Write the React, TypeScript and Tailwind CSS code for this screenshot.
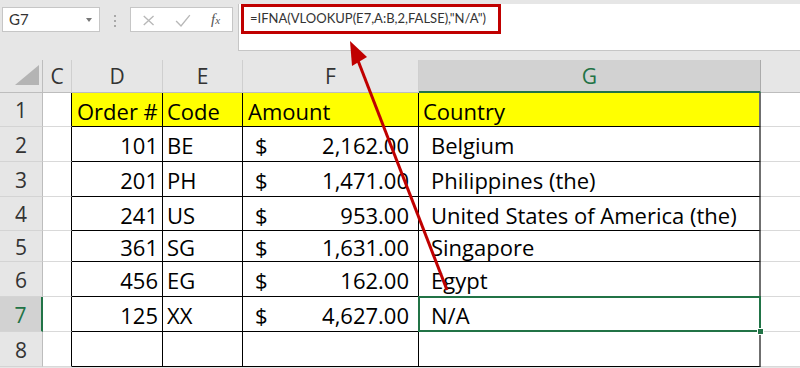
import React from "react";

type Row = {
  n: number;
  d: string;
  e: string;
  f?: string;
  amt?: string;
  g: string;
  head?: boolean;
};

const rows: Row[] = [
  { n: 1, d: "Order #", e: "Code", f: "Amount", g: "Country", head: true },
  { n: 2, d: "101", e: "BE", amt: "2,162.00", g: "Belgium" },
  { n: 3, d: "201", e: "PH", amt: "1,471.00", g: "Philippines (the)" },
  { n: 4, d: "241", e: "US", amt: "953.00", g: "United States of America (the)" },
  { n: 5, d: "361", e: "SG", amt: "1,631.00", g: "Singapore" },
  { n: 6, d: "456", e: "EG", amt: "162.00", g: "Egypt" },
  { n: 7, d: "125", e: "XX", amt: "4,627.00", g: "N/A" },
  { n: 8, d: "", e: "", amt: "", g: "" },
];

function Toolbar() {
  return (
    <div className="h-[60px] flex items-start pt-[4px] pl-[2px] [font-family:Lato,sans-serif]">
      <div className="mt-[3px] w-[98px] h-[25px] bg-white border border-[#c6c6c6] flex items-center pl-[6px] pr-[7px]">
        <span className="text-[15px] text-[#333] flex-1 leading-none">G7</span>
        <span className="w-0 h-0 border-l-[3px] border-r-[3px] border-t-[4px] border-l-transparent border-r-transparent border-t-[#777]" />
      </div>
      <div className="w-[30px] h-[31px] flex flex-col items-center justify-center gap-[3px] pt-[2px]">
        <span className="w-[2px] h-[2px] bg-[#a8a8a8]" />
        <span className="w-[2px] h-[2px] bg-[#a8a8a8]" />
        <span className="w-[2px] h-[2px] bg-[#a8a8a8]" />
      </div>
      <div className="mt-[3px] w-[103px] h-[25px] bg-white border border-[#c6c6c6] flex items-center">
        <svg width="103" height="23" viewBox="0 0 103 23">
          <path d="M13 8 L23 17 M23 8 L13 17" stroke="#b8b8b8" strokeWidth="1.4" fill="none" />
          <path d="M46 13 L51 18 L60 7" stroke="#b8b8b8" strokeWidth="1.4" fill="none" />
        </svg>
        <span className="absolute ml-[80px] text-[15px] italic text-[#555] [font-family:'Liberation_Serif',serif] leading-none">
          f<span className="text-[11px]">x</span>
        </span>
      </div>
      <div className="ml-[5px] flex-1 h-[47px] bg-white border-l border-b border-[#c6c6c6]">
        <div className="ml-[2px] w-[260px] h-[30px] border-[3px] border-[#c00000] flex items-center pl-[6px] text-[13px] text-[#333] whitespace-nowrap">
          =IFNA(VLOOKUP(E7,A:B,2,FALSE),"N/A")
        </div>
      </div>
    </div>
  );
}

function ColHeader({ label, selected, last }: { label: string; selected?: boolean; last?: boolean }) {
  return (
    <div
      className={
        "flex items-center justify-center text-[21px] leading-none pt-[1px] " +
        (selected
          ? "bg-[#d2d2d2] text-[#217346] border-b-2 border-b-[#217346] border-r border-r-[#ababab]"
          : "bg-[#e6e6e6] text-[#333] border-b border-b-[#bdbdbd] " + (last ? "" : "border-r border-r-[#cfcfcf]"))
      }
    >
      {label}
    </div>
  );
}

function App() {
  const cellText = "text-[22px] leading-none text-black whitespace-nowrap";
  return (
    <div className="relative w-[800px] h-[368px] overflow-hidden bg-[#e6e6e6] [font-family:'Open_Sans',sans-serif]">
      <Toolbar />
      <div className="grid grid-cols-[43px_29px_91px_80px_176px_342px_39px] grid-rows-[33px_34px_35px_35px_34px_31px_35px_35px_35px]">
        <div className="relative bg-[#e6e6e6] border-r border-r-[#bdbdbd] border-b border-b-[#bdbdbd]">
          <div className="absolute right-[3px] bottom-[7px] w-0 h-0 border-l-[24px] border-l-transparent border-b-[20px] border-b-[#b4b4b4]" />
        </div>
        <ColHeader label="C" />
        <ColHeader label="D" />
        <ColHeader label="E" />
        <ColHeader label="F" />
        <ColHeader label="G" selected />
        <ColHeader label="" last />

        {rows.map((r) => {
          const sel = r.n === 7;
          const fill = r.head ? "bg-[#ffff00]" : "bg-white";
          const tb = "border-r border-r-black border-b border-b-black";
          return (
            <React.Fragment key={r.n}>
              <div
                className={
                  "flex items-center justify-center text-[21px] leading-none pt-[2px] border-b border-b-[#d4d4d4] " +
                  (sel
                    ? "bg-[#d2d2d2] text-[#217346] border-r-2 border-r-[#217346]"
                    : "bg-[#e6e6e6] text-[#333] border-r border-r-[#bdbdbd]")
                }
              >
                {r.n}
              </div>
              <div className="bg-white border-r border-r-black border-b border-b-[#d9d9d9]" />
              <div
                className={
                  fill +
                  " " +
                  tb +
                  " flex items-center pt-[2px] " +
                  (r.head ? "pl-[5px]" : "justify-end pr-[4px]")
                }
              >
                <span className={cellText}>{r.d}</span>
              </div>
              <div className={fill + " " + tb + " flex items-center pt-[2px] pl-[4px]"}>
                <span className={cellText}>{r.e}</span>
              </div>
              <div className={fill + " " + tb + " flex items-center pt-[2px] pl-[5px] pr-[9px]"}>
                {r.head ? (
                  <span className={cellText}>{r.f}</span>
                ) : r.amt ? (
                  <>
                    <span className={cellText + " pl-[7px]"}>$</span>
                    <span className={cellText + " ml-auto"}>{r.amt}</span>
                  </>
                ) : null}
              </div>
              <div
                className={
                  fill +
                  " relative border-r-2 border-r-[#6f6f6f] border-b border-b-black flex items-center pt-[2px] " +
                  (r.head ? "pl-[4px]" : "pl-[12px]")
                }
              >
                <span className={cellText}>{r.g}</span>
                {sel && (
                  <>
                    <div className="absolute -left-[1px] -top-[1px] -right-[2px] -bottom-[1px] border-2 border-[#217346] z-10" />
                    <div className="absolute -right-[5px] -bottom-[4px] w-[7px] h-[7px] bg-[#217346] border border-white z-20" />
                  </>
                )}
              </div>
              <div className="bg-white border-b border-b-[#d9d9d9]" />
            </React.Fragment>
          );
        })}
      </div>

      <svg className="absolute left-0 top-0 pointer-events-none z-30" width="800" height="368" viewBox="0 0 800 368">
        <line x1="447" y1="290" x2="357" y2="58" stroke="#c00000" strokeWidth="3" />
        <polygon points="350,41 367,57 352,66" fill="#c00000" />
      </svg>
    </div>
  );
}

export default App;
